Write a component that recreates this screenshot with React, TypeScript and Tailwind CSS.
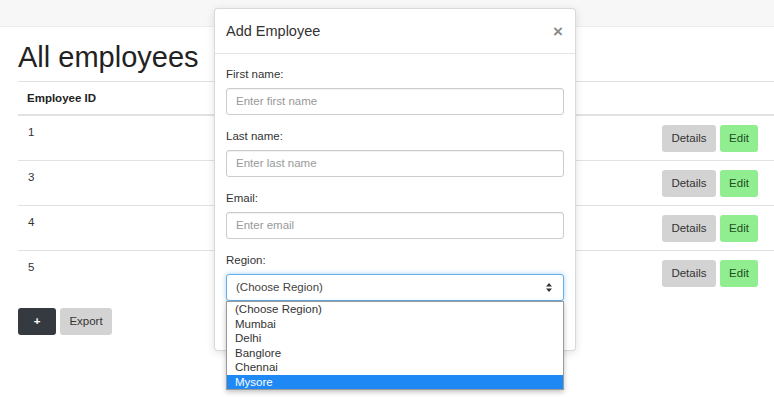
import React from "react";

const rows = ["1", "3", "4", "5"];
const regions = ["(Choose Region)", "Mumbai", "Delhi", "Banglore", "Chennai", "Mysore"];

function Field({ label, placeholder }: { label: string; placeholder: string }) {
  return (
    <div className="mb-[13px]">
      <div className="h-[16.5px] leading-[16.5px] mb-[5.5px] text-[#333]">{label}</div>
      <div className="h-[27px] border border-[#cccccc] rounded-[3px] bg-white px-[9px] flex items-center text-[#999] shadow-[inset_0_1px_1px_rgba(0,0,0,0.06)]">
        {placeholder}
      </div>
    </div>
  );
}

export default function App() {
  return (
    <div
      className="relative w-full h-[397px] overflow-hidden bg-white text-[#333] text-[11.5px]"
      style={{ fontFamily: '"Liberation Sans", Arial, sans-serif' }}
    >
      <div className="h-[27px] bg-[#f7f7f7] border-b border-[#ececec]" />
      <div className="pl-[18px]">
        <h1 className="mt-[14px] mb-[8px] text-[29px] leading-[32px] font-normal text-[#222]">All employees</h1>
        <div className="border-t border-[#e2e2e2]">
          <div className="h-[34px] border-b-2 border-[#e2e2e2] pl-[9px] pt-[8px] leading-[16.5px] font-bold text-[#222]">
            Employee ID
          </div>
          {rows.map((id, i) => (
            <div
              key={id}
              className={
                "flex justify-between h-[45px] pl-[10px] pr-[16px] pt-[8px] " +
                (i < rows.length - 1 ? "border-b border-[#e2e2e2]" : "")
              }
            >
              <div className="leading-[16.5px] text-[#333]">{id}</div>
              <div className="flex gap-[4px] pt-[1px]">
                <div className="w-[54px] h-[27px] rounded-[3px] bg-[#d3d3d3] text-[#333] flex items-center justify-center">
                  Details
                </div>
                <div className="w-[38px] h-[27px] rounded-[3px] bg-[#90ee90] text-[#234d23] flex items-center justify-center">
                  Edit
                </div>
              </div>
            </div>
          ))}
        </div>
        <div className="flex gap-[4px] mt-[12px]">
          <div className="w-[38px] h-[27px] rounded-[3px] bg-[#343a40] text-white font-bold flex items-center justify-center">
            +
          </div>
          <div className="w-[52px] h-[27px] rounded-[3px] bg-[#d3d3d3] text-[#333] flex items-center justify-center">
            Export
          </div>
        </div>
      </div>

      {/* Modal */}
      <div className="absolute left-[214px] top-[8px] w-[362px] h-[343px] bg-white border border-[rgba(0,0,0,0.15)] rounded-[4px] shadow-[0_2px_8px_rgba(0,0,0,0.12)]">
        <div className="flex justify-between items-start px-[11px] pt-[12px] h-[45px] border-b border-[#e5e5e5]">
          <div className="text-[14.5px] leading-[20.5px] text-[#333]">Add Employee</div>
          <div className="text-[17px] leading-[17px] font-bold text-[#8a8a8a] mr-[1px] mt-[2px]">×</div>
        </div>
        <div className="px-[11px] pt-[12px]">
          <Field label="First name:" placeholder="Enter first name" />
          <Field label="Last name:" placeholder="Enter last name" />
          <Field label="Email:" placeholder="Enter email" />
          <div className="mb-[12px]">
            <div className="h-[16.5px] leading-[16.5px] mb-[5.5px] text-[#333]">Region:</div>
            <div className="relative">
              <div className="h-[27px] border border-[#66afe9] rounded-[3px] bg-white pl-[9px] pr-[11px] flex items-center justify-between text-[#444] shadow-[0_0_5px_rgba(102,175,233,0.6)]">
                <span>(Choose Region)</span>
                <svg width="6" height="9" viewBox="0 0 6 9">
                  <path d="M3 0 L6 3.5 L0 3.5 Z" fill="#333" />
                  <path d="M3 9 L6 5.5 L0 5.5 Z" fill="#333" />
                </svg>
              </div>
            </div>
          </div>
          <div className="w-[64px] h-[27px] rounded-[3px] bg-[#343a40]" />
        </div>
      </div>

      {/* Open select list */}
      <div className="absolute left-[226px] top-[301px] w-[338px] bg-white border border-[#9a9a9a] shadow-[0_2px_5px_rgba(0,0,0,0.25)] z-10">
        {regions.map((r) => (
          <div
            key={r}
            className={
              "h-[14.5px] leading-[14.5px] pl-[8px] " +
              (r === "Mysore" ? "bg-[#1e88f5] text-white" : "text-[#333]")
            }
          >
            {r}
          </div>
        ))}
      </div>
    </div>
  );
}
